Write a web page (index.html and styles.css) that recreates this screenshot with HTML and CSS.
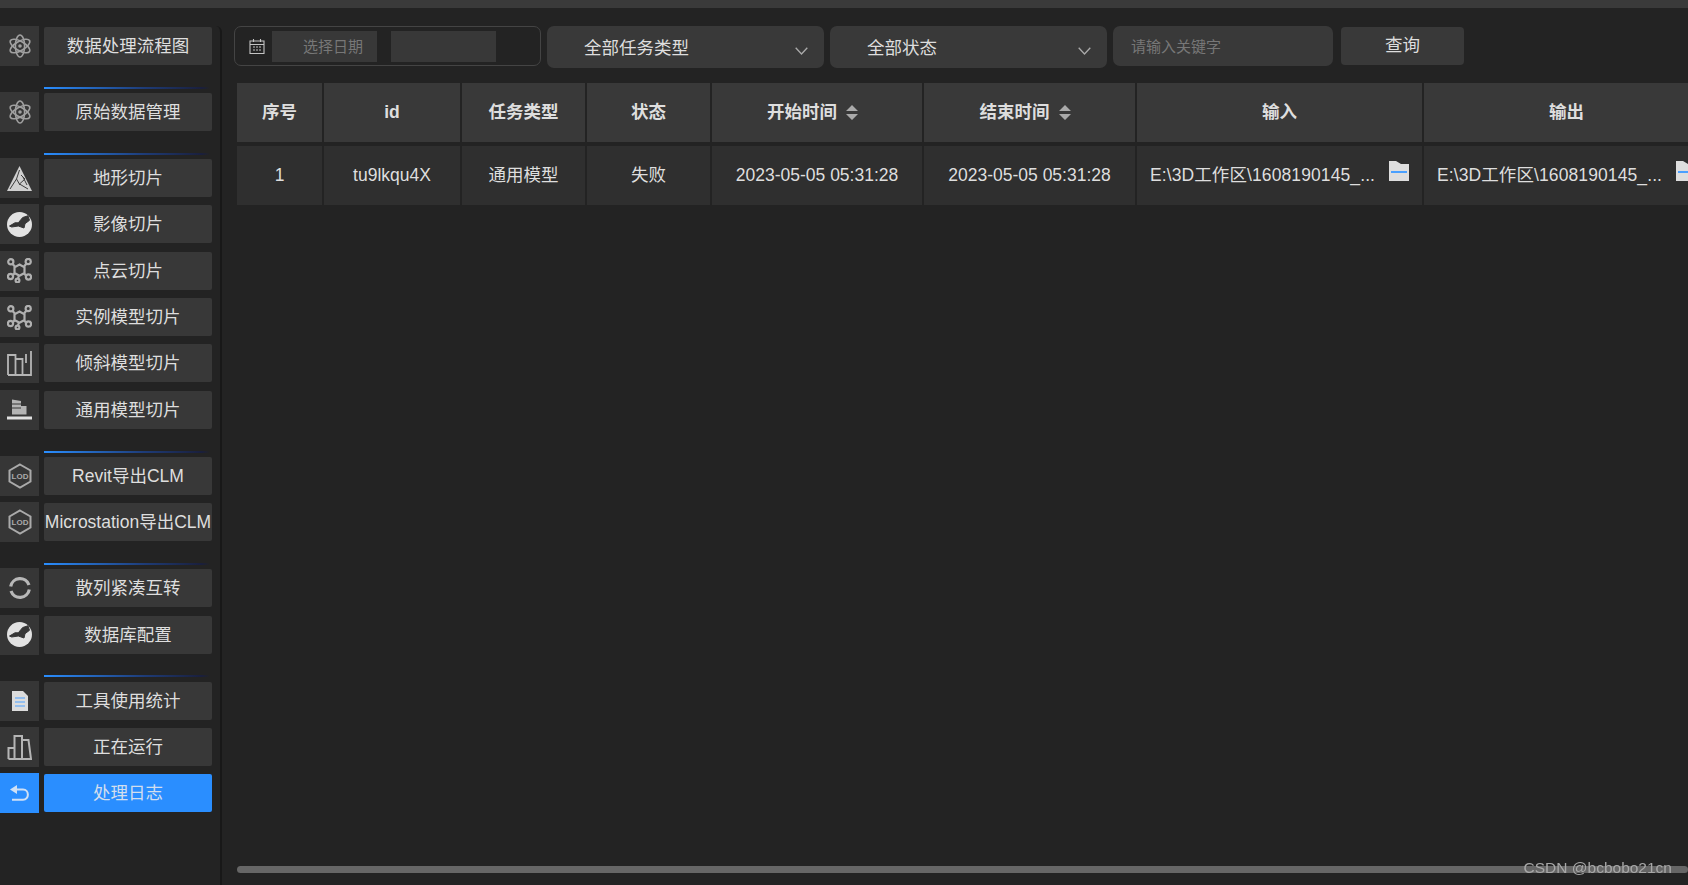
FILE: index.html
```html
<!DOCTYPE html>
<html lang="zh-CN">
<head>
<meta charset="utf-8">
<title>处理日志</title>
<link rel="stylesheet" href="styles.css">
</head>
<body>
<svg class="defs" aria-hidden="true">
  <symbol id="i-atom" viewBox="0 0 24 24"><g fill="none" stroke="#a0a0a0" stroke-width="1.6"><ellipse cx="12" cy="12" rx="4.6" ry="11"/><ellipse cx="12" cy="12" rx="4.6" ry="11" transform="rotate(60 12 12)"/><ellipse cx="12" cy="12" rx="4.6" ry="11" transform="rotate(120 12 12)"/></g><circle cx="12" cy="12" r="1.8" fill="#a0a0a0"/></symbol>
  <symbol id="i-terrain" viewBox="0 0 25 25"><path d="M12.500 0L25 25H0Z" fill="#cfcfcf"/><path d="M12.500 4L9.500 13L3 23M14 9L18 13L12.500 18L21 23M9.500 13L13 19M16 11L20 19" fill="none" stroke="#3c3c3c" stroke-width="1"/></symbol>
  <symbol id="i-globe" viewBox="0 0 25 25"><circle cx="12.500" cy="12.500" r="12.500" fill="#e2e2e2"/><path d="M2.500 14L8 10.800L11.300 10.800L15.700 5.500L21 3.800L22.500 8.300L18 11.700L17 16L11.300 14L4.700 15Z" fill="#363636" stroke="#363636" stroke-linejoin="round"/></symbol>
  <symbol id="i-net" viewBox="0 0 25 25"><g fill="none" stroke="#b0b0b0" stroke-width="2.200"><path d="M12.500 6.500L17.500 9.300V15L12.500 17.800L7.500 15V9.300Z"/><circle cx="3.800" cy="3.800" r="2.600"/><circle cx="21.200" cy="3.500" r="2.600"/><circle cx="3.500" cy="18.500" r="2.600"/><circle cx="21.500" cy="19" r="2.600"/><circle cx="10.500" cy="22.500" r="1.900"/><path d="M5.500 6L8 8.500M19.500 5.500L17 8.500M6 17L8 15M19 17.500L17 15.500M11 20.500L11.800 18"/></g></symbol>
  <symbol id="i-chart" viewBox="0 0 25 25"><path d="M1 24V4H8.500V24M8.500 8H15.500V24M1 24H24V0M19 12V3" fill="none" stroke="#b5b5b5" stroke-width="1.800"/></symbol>
  <symbol id="i-building" viewBox="0 0 25 21"><path d="M0 17.500H25V20.500H0Z" fill="#e0e0e0"/><path d="M5 .5L14 2V15.500H5ZM14 7H19.500V15.500H14Z" fill="#b4b4b4"/><path d="M5 5H14M5 9H14" stroke="#363636" stroke-width="1"/></symbol>
  <symbol id="i-sync" viewBox="0 0 22 22"><path d="M1.700 9.500A9.500 9.500 0 0 1 20 8M20.300 12.500A9.500 9.500 0 0 1 2 14" fill="none" stroke="#b8b8b8" stroke-width="3.200"/></symbol>
  <symbol id="i-doc" viewBox="0 0 16 20"><path d="M0 0H11L16 5V20H0Z" fill="#dcdcdc"/><path d="M3 7H13M3 11H13M3 15H13" stroke="#4aa0ff" stroke-width="1.200"/></symbol>
  <symbol id="i-run" viewBox="0 0 25 25"><path d="M1.500 24V13H7.500V24M7.500 13V1H15V24M15 5H21.500L24 24H1.500" fill="none" stroke="#b5b5b5" stroke-width="2"/></symbol>
  <symbol id="i-back" viewBox="0 0 20 16"><path d="M0 4.500L7 0V9Z" fill="#cfe0f5"/><path d="M6 4.500H13C19.500 4.500 19.500 14.800 13 14.800H2" fill="none" stroke="#cfe0f5" stroke-width="2"/></symbol>
  <symbol id="i-folder" viewBox="0 0 20 20"><path d="M0 0H7L12 3H20V20H0Z" fill="#dedede"/><path d="M2 11H18" stroke="#4aa0ff" stroke-width="2"/></symbol>
</svg>

<div class="topbar"></div>
<div class="app">
  <nav class="sidebar">
    <div class="group">
      <div class="row"><span class="tile"><svg class="ic-atom"><use href="#i-atom"/></svg></span><a class="btn">数据处理流程图</a></div>
    </div>
    <div class="group">
      <div class="divider"></div>
      <div class="row"><span class="tile"><svg class="ic-atom"><use href="#i-atom"/></svg></span><a class="btn">原始数据管理</a></div>
    </div>
    <div class="group">
      <div class="divider"></div>
      <div class="row"><span class="tile"><svg class="ic-25"><use href="#i-terrain"/></svg></span><a class="btn">地形切片</a></div>
      <div class="row"><span class="tile"><svg class="ic-25"><use href="#i-globe"/></svg></span><a class="btn">影像切片</a></div>
      <div class="row"><span class="tile"><svg class="ic-25"><use href="#i-net"/></svg></span><a class="btn">点云切片</a></div>
      <div class="row"><span class="tile"><svg class="ic-25"><use href="#i-net"/></svg></span><a class="btn">实例模型切片</a></div>
      <div class="row"><span class="tile"><svg class="ic-25"><use href="#i-chart"/></svg></span><a class="btn">倾斜模型切片</a></div>
      <div class="row"><span class="tile"><svg class="ic-25"><use href="#i-building"/></svg></span><a class="btn">通用模型切片</a></div>
    </div>
    <div class="group">
      <div class="divider"></div>
      <div class="row"><span class="tile"><svg class="ic-lod" viewBox="0 0 24 26"><path d="M12 1.500L22.500 7.500V18.500L12 24.500L1.500 18.500V7.500Z" fill="none" stroke="#aaa" stroke-width="2"/><text x="12" y="16" text-anchor="middle" class="lod">LOD</text></svg></span><a class="btn">Revit导出CLM</a></div>
      <div class="row"><span class="tile"><svg class="ic-lod" viewBox="0 0 24 26"><path d="M12 1.500L22.500 7.500V18.500L12 24.500L1.500 18.500V7.500Z" fill="none" stroke="#aaa" stroke-width="2"/><text x="12" y="16" text-anchor="middle" class="lod">LOD</text></svg></span><a class="btn">Microstation导出CLM</a></div>
    </div>
    <div class="group">
      <div class="divider"></div>
      <div class="row"><span class="tile"><svg class="ic-sync"><use href="#i-sync"/></svg></span><a class="btn">散列紧凑互转</a></div>
      <div class="row"><span class="tile"><svg class="ic-25"><use href="#i-globe"/></svg></span><a class="btn">数据库配置</a></div>
    </div>
    <div class="group">
      <div class="divider"></div>
      <div class="row"><span class="tile"><svg class="ic-doc"><use href="#i-doc"/></svg></span><a class="btn">工具使用统计</a></div>
      <div class="row"><span class="tile"><svg class="ic-25"><use href="#i-run"/></svg></span><a class="btn">正在运行</a></div>
      <div class="row active"><span class="tile"><svg class="ic-back"><use href="#i-back"/></svg></span><a class="btn">处理日志</a></div>
    </div>
  </nav>

  <main class="main">
    <div class="toolbar">
      <div class="date">
        <svg class="cal" viewBox="0 0 16 16"><path d="M1 3H15V15.500H1ZM1 6.500H15M4.500 1V4M11.500 1V4" fill="none" stroke="#c4c4c4" stroke-width="1.100"/><path d="M4 9H6M7 9H9M10 9H12M4 12H6M7 12H9M10 12H12" stroke="#c4c4c4" stroke-width="1.100"/></svg>
        <span class="date-input">选择日期</span>
        <span class="date-input second"></span>
      </div>
      <div class="select"><span>全部任务类型</span><svg class="chev" viewBox="0 0 13 8"><path d="M.7.7L6.500 7L12.300.7" fill="none" stroke="#aaa" stroke-width="1.300"/></svg></div>
      <div class="select"><span>全部状态</span><svg class="chev" viewBox="0 0 13 8"><path d="M.7.7L6.500 7L12.300.7" fill="none" stroke="#aaa" stroke-width="1.300"/></svg></div>
      <div class="keyword">请输入关键字</div>
      <div class="query">查询</div>
    </div>

    <div class="table">
      <div class="th">序号</div>
      <div class="th">id</div>
      <div class="th">任务类型</div>
      <div class="th">状态</div>
      <div class="th sortable">开始时间<svg class="sort" viewBox="0 0 12 15"><path d="M6 0L12 6H0ZM0 9H12L6 15Z" fill="#aaa"/></svg></div>
      <div class="th sortable">结束时间<svg class="sort" viewBox="0 0 12 15"><path d="M6 0L12 6H0ZM0 9H12L6 15Z" fill="#aaa"/></svg></div>
      <div class="th">输入</div>
      <div class="th">输出</div>

      <div class="td">1</div>
      <div class="td">tu9lkqu4X</div>
      <div class="td">通用模型</div>
      <div class="td">失败</div>
      <div class="td">2023-05-05 05:31:28</div>
      <div class="td">2023-05-05 05:31:28</div>
      <div class="td path"><span>E:\3D工作区\1608190145_...</span><svg class="folder"><use href="#i-folder"/></svg></div>
      <div class="td path"><span>E:\3D工作区\1608190145_...</span><svg class="folder"><use href="#i-folder"/></svg></div>
    </div>

    <div class="scrollbar"></div>
  </main>
</div>
<div class="watermark">CSDN @bcbobo21cn</div>
</body>
</html>
```
FILE: styles.css
```css
* { box-sizing: border-box; }

html, body {
  margin: 0;
  height: 885px;
  overflow: hidden;
  background: #232323;
  color: #dedede;
  font-family: "Liberation Sans", "Noto Sans CJK SC", sans-serif;
  font-size: 17.5px;
  line-height: 20px;
}

.defs { position: absolute; width: 0; height: 0; }
.lod { font: bold 8px "Liberation Sans", sans-serif; fill: #aaa; }

.topbar { height: 8px; background: #3a3a3a; }

.app { display: flex; height: 877px; }

/* sidebar */
.sidebar {
  flex: none;
  width: 222px;
  margin-top: 18px;
  border-right: 2px solid #181818;
  border-top-right-radius: 6px;
  display: flex;
  flex-direction: column;
  gap: 20.75px;
}
.group { display: flex; flex-direction: column; gap: 6.33px; }
.divider {
  width: 166px;
  height: 2px;
  margin: 0 0 -3px 44px;
  background: linear-gradient(90deg, #2a8eff, #1e3c78 60%, #1a1f3c 95%, transparent);
}
.row { display: flex; align-items: center; height: 40px; gap: 5px; }
.tile {
  flex: none;
  width: 39px;
  height: 40px;
  background: #363636;
  display: flex;
  align-items: center;
  justify-content: center;
}
.btn {
  width: 168px;
  height: 38px;
  background: #383838;
  border-radius: 2px;
  display: flex;
  align-items: center;
  justify-content: center;
  white-space: nowrap;
}
.active .tile, .active .btn { background: #2a8eff; color: #d2deee; }

.ic-atom { width: 24px; height: 24px; }
.ic-25 { width: 25px; height: 25px; }
.ic-lod { width: 24px; height: 26px; }
.ic-sync { width: 22px; height: 22px; }
.ic-doc { width: 16px; height: 20px; }
.ic-back { width: 20px; height: 16px; }

/* main */
.main {
  flex: 1;
  min-width: 0;
  padding: 18px 0 12px 12px;
  display: flex;
  flex-direction: column;
  overflow: hidden;
}
.toolbar { display: flex; align-items: flex-start; gap: 6px; }
.date {
  flex: none;
  width: 307px;
  height: 40px;
  border: 1px solid #444;
  border-radius: 7px;
  display: flex;
  align-items: center;
  padding-left: 14px;
}
.cal { width: 16px; height: 16px; flex: none; margin-right: 7px; }
.date-input {
  width: 105px;
  height: 31px;
  background: #383838;
  color: #777;
  font-size: 15px;
  line-height: 31px;
  padding-left: 31px;
}
.date-input.second { margin-left: 14px; }
.select {
  flex: none;
  width: 277px;
  height: 42px;
  background: #393939;
  border-radius: 7px;
  padding: 2px 16px 0 37px;
  display: flex;
  align-items: center;
  justify-content: space-between;
}
.chev { width: 13px; height: 8px; margin-top: 5px; }
.keyword {
  flex: none;
  width: 220px;
  height: 40px;
  background: #393939;
  border-radius: 7px;
  color: #777;
  font-size: 15px;
  line-height: 41px;
  padding-left: 18px;
}
.query {
  flex: none;
  width: 123px;
  height: 38px;
  margin: 1px 0 0 2px;
  padding-bottom: 2px;
  background: #393939;
  border-radius: 4px;
  display: flex;
  align-items: center;
  justify-content: center;
}

/* table */
.table {
  flex: 1;
  margin: 15px 0 0 3px;
  display: grid;
  grid-template-columns: 85px 136px 123px 123px 210px 211px 285px 285px;
  grid-template-rows: 59px 59px;
  gap: 4px 2px;
  align-content: start;
}
.th, .td {
  display: flex;
  align-items: center;
  justify-content: center;
  padding-bottom: 2px;
  white-space: nowrap;
}
.th { background: #393939; font-weight: bold; }
.td { background: #2f2f2f; }
.sortable { padding-right: 9px; }
.sort { width: 12px; height: 15px; margin: 2px 0 0 9px; }
.path { justify-content: flex-start; padding-left: 13px; letter-spacing: .1px; }
.folder { width: 20px; height: 20px; flex: none; margin: -7px 0 0 14px; }

.scrollbar {
  flex: none;
  height: 7px;
  margin-left: 3px;
  background: #666;
  border-radius: 4px;
}

.watermark {
  position: absolute;
  right: 16px;
  bottom: 7px;
  color: #a8a8a8;
  font-size: 15.5px;
  filter: blur(.3px);
}
```
